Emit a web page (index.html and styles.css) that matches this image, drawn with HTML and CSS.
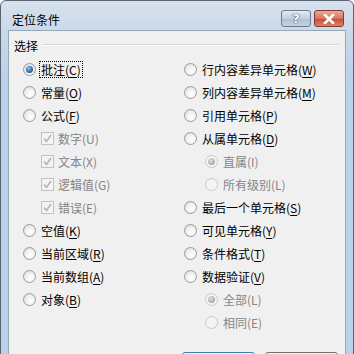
FILE: index.html
```html
<!DOCTYPE html>
<html lang="zh-CN">
<head>
    <meta charset="UTF-8">
    <title>定位条件</title>
    <link rel="stylesheet" href="styles.css">
</head>
<body>
    <div class="window">
        <div class="titlebar">
            <span class="title">定位条件</span>
            <div class="caption-buttons">
                <span class="cap help">?</span>
                <span class="cap close">
                    <svg width="12" height="10" viewBox="0 0 12 10"><path d="M2 1 L10 9 M10 1 L2 9" stroke="#fff" stroke-width="2.6" stroke-linecap="square"/></svg>
                </span>
            </div>
        </div>
        <div class="content">
            <div class="group-label"><span>选择</span><i class="sep"></i></div>
            <div class="options">
                <div class="col">
                    <div class="row"><span class="radio checked"></span><span class="focus">批注(<u>C</u>)</span></div>
                    <div class="row"><span class="radio"></span>常量(<u>O</u>)</div>
                    <div class="row"><span class="radio"></span>公式(<u>F</u>)</div>
                    <div class="row sub off"><span class="check"><svg width="11" height="11" viewBox="0 0 11 11"><path d="M2 5.5 L4.5 8.5 L9 2" fill="none" stroke="#b4b4b4" stroke-width="1.6"/></svg></span>数字(U)</div>
                    <div class="row sub off"><span class="check"><svg width="11" height="11" viewBox="0 0 11 11"><path d="M2 5.5 L4.5 8.5 L9 2" fill="none" stroke="#b4b4b4" stroke-width="1.6"/></svg></span>文本(X)</div>
                    <div class="row sub off"><span class="check"><svg width="11" height="11" viewBox="0 0 11 11"><path d="M2 5.5 L4.5 8.5 L9 2" fill="none" stroke="#b4b4b4" stroke-width="1.6"/></svg></span>逻辑值(G)</div>
                    <div class="row sub off"><span class="check"><svg width="11" height="11" viewBox="0 0 11 11"><path d="M2 5.5 L4.5 8.5 L9 2" fill="none" stroke="#b4b4b4" stroke-width="1.6"/></svg></span>错误(E)</div>
                    <div class="row"><span class="radio"></span>空值(<u>K</u>)</div>
                    <div class="row"><span class="radio"></span>当前区域(<u>R</u>)</div>
                    <div class="row"><span class="radio"></span>当前数组(<u>A</u>)</div>
                    <div class="row"><span class="radio"></span>对象(<u>B</u>)</div>
                </div>
                <div class="col">
                    <div class="row"><span class="radio"></span>行内容差异单元格(<u>W</u>)</div>
                    <div class="row"><span class="radio"></span>列内容差异单元格(<u>M</u>)</div>
                    <div class="row"><span class="radio"></span>引用单元格(<u>P</u>)</div>
                    <div class="row"><span class="radio"></span>从属单元格(<u>D</u>)</div>
                    <div class="row sub2 off"><span class="radio checked"></span>直属(I)</div>
                    <div class="row sub2 off"><span class="radio"></span>所有级别(L)</div>
                    <div class="row"><span class="radio"></span>最后一个单元格(<u>S</u>)</div>
                    <div class="row"><span class="radio"></span>可见单元格(<u>Y</u>)</div>
                    <div class="row"><span class="radio"></span>条件格式(<u>T</u>)</div>
                    <div class="row"><span class="radio"></span>数据验证(<u>V</u>)</div>
                    <div class="row sub2 off"><span class="radio checked"></span>全部(L)</div>
                    <div class="row sub2 off"><span class="radio"></span>相同(E)</div>
                </div>
            </div>
            <div class="buttons">
                <span class="btn default"></span>
                <span class="btn"></span>
            </div>
        </div>
    </div>
</body>
</html>
```

FILE: styles.css
```css
html, body {
    margin: 0;
    padding: 0;
    height: 354px;
    overflow: hidden;
    background: #ffffff;
}

body {
    font-family: "Noto Sans CJK SC", "Noto Sans", sans-serif;
    font-size: 12px;
    color: #000;
}

.window {
    width: 352px;
    height: 360px;
    overflow: hidden;
    border: 1px solid #5a6470;
    border-radius: 6px 6px 0 0;
    background: linear-gradient(#d6e1ec, #c7d7e9 40px, #b9d1ea 80px);
}

.titlebar {
    height: 29px;
    display: flex;
    align-items: flex-start;
    justify-content: space-between;
}

.title {
    margin: 10px 0 0 11px;
    font-size: 12px;
    line-height: 17px;
}

.caption-buttons {
    display: flex;
    gap: 3px;
    margin: 9px 9px 0 0;
}

.cap {
    width: 28px;
    height: 15px;
    border: 1px solid #6e7b8c;
    border-radius: 3px;
    display: flex;
    align-items: center;
    justify-content: center;
}

.help {
    background: linear-gradient(#e3eaf3, #c1cfdf 50%, #aebfd3 51%, #c3d3e6);
    color: #fff;
    font-family: "DejaVu Sans", sans-serif;
    font-weight: bold;
    font-size: 13px;
    line-height: 15px;
    text-shadow: 0 0 1px #3a4a60, 0 0 1px #3a4a60, 0 0 1px #3a4a60;
}

.close {
    border-color: #7b3b33;
    background: linear-gradient(#eaa998, #d8745f 50%, #c8452e 51%, #dc856c);
}

.content {
    margin: 0 7px;
    border: 1px solid #97a7b8;
    background: #f0f0f0;
    height: 340px;
    padding-top: 6px;
}

.group-label {
    display: flex;
    align-items: center;
    height: 16px;
    margin-left: 5px;
    margin-right: 6px;
}

.group-label .sep {
    flex: 1;
    height: 0;
    border-top: 1px solid #d5d5d5;
    border-bottom: 1px solid #ffffff;
    margin-left: 5px;
}

.options {
    display: grid;
    grid-template-columns: 161px 1fr;
    margin: 5px 0 0 14px;
}

.row {
    height: 23px;
    display: flex;
    align-items: center;
    white-space: nowrap;
}

.row.sub {
    padding-left: 18px;
}

.row.sub2 {
    padding-left: 21px;
}

.row.off {
    color: #858585;
}

.radio {
    width: 11px;
    height: 11px;
    border-radius: 50%;
    border: 1px solid #9a9a9a;
    background: radial-gradient(circle at 60% 65%, #ffffff 0, #f2f2f2 45%, #d5d5d5 100%);
    margin-right: 5px;
    flex: none;
    position: relative;
}

.radio.checked::after {
    content: "";
    position: absolute;
    left: 2px;
    top: 2px;
    width: 7px;
    height: 7px;
    border-radius: 50%;
    background: radial-gradient(circle at 40% 35%, #8fc7f0 0, #2d6ea6 55%, #163e66 100%);
}

.off .radio {
    border-color: #c9c9c9;
    background: #f4f4f4;
}

.off .radio.checked::after {
    background: radial-gradient(circle at 40% 35%, #e0e0e0 0, #b2b2b2 60%, #a2a2a2 100%);
}

.check {
    width: 11px;
    height: 11px;
    border: 1px solid #c2c2c2;
    background: #f4f4f4;
    margin-right: 4px;
    flex: none;
    display: flex;
}

.focus {
    outline: 1px dotted #000;
    outline-offset: 0;
    padding: 0 1px;
    margin-left: -1px;
    line-height: 15px;
}

u {
    text-underline-offset: 2px;
}

.buttons {
    display: flex;
    justify-content: flex-end;
    gap: 10px;
    margin: 18px 7px 0 0;
}

.btn {
    width: 71px;
    height: 21px;
    border: 1px solid #707070;
    border-radius: 3px;
    background: linear-gradient(#f2f2f2, #ebebeb 50%, #dddddd 51%, #cfcfcf);
}

.btn.default {
    border-color: #3c7fb1;
    background: linear-gradient(#eaf6fd, #d9f0fc 50%, #bee6fd 51%, #a7d9f5);
}
```
